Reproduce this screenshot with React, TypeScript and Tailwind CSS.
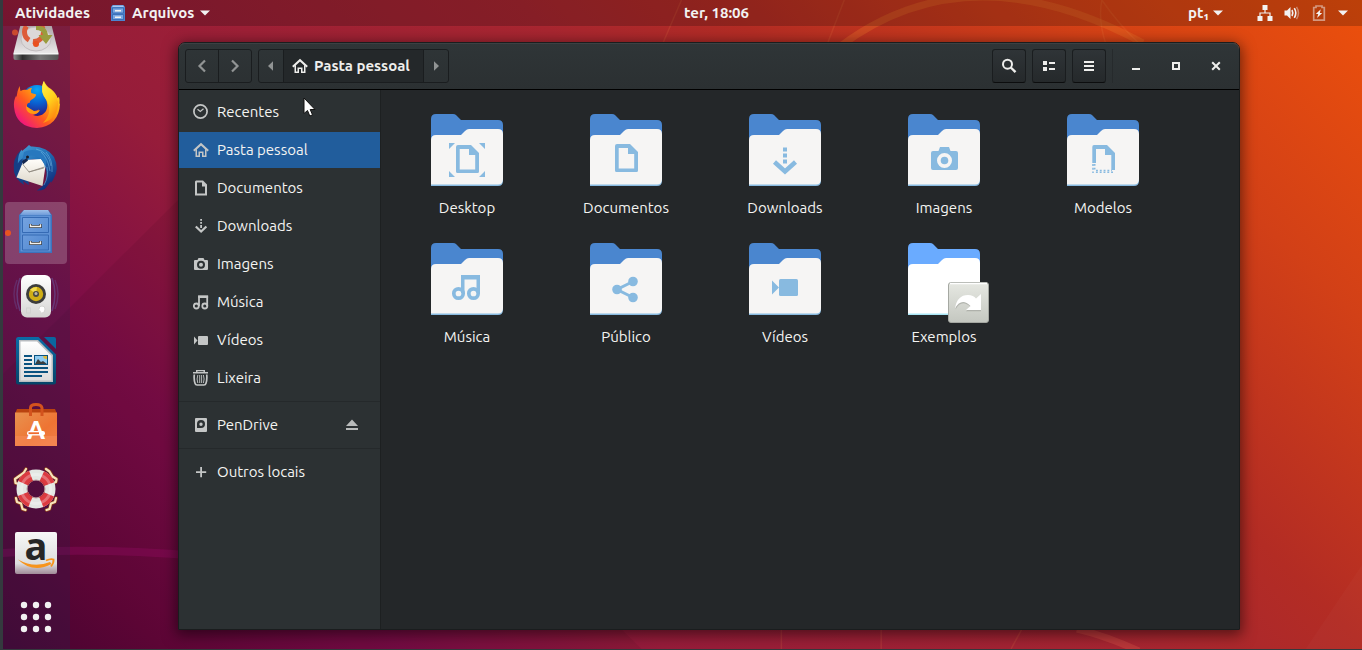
import React, { useState } from "react";

type IconProps = { className?: string };

/* ---------- symbolic 16px icons ---------- */

const Symbolic = ({ className = "size-4", children }: IconProps & { children: React.ReactNode }) => (
  <svg viewBox="0 0 16 16" className={`shrink-0 ${className}`} fill="currentColor" aria-hidden="true">
    {children}
  </svg>
);

const RecentIcon = () => (
  <Symbolic>
    <circle cx="7.500" cy="7.500" r="6.600" fill="none" stroke="currentColor" strokeWidth="1.700" />
    <path d="M4.500 5.200 7.300 7.500 10.500 4.800" fill="none" stroke="currentColor" strokeWidth="1.300" />
  </Symbolic>
);

const HomeIcon = () => (
  <Symbolic>
    <path d="M.8 8.8 8 2.2l7.2 6.6" fill="none" stroke="currentColor" strokeWidth="2" />
    <path d="M2.5 8v7H7v-4h2v4h4.500V8L12 6.800V13.500h-1.500V9.500h-5v4H4V6.800z" />
  </Symbolic>
);

const DocumentIcon = () => (
  <Symbolic>
    <path fillRule="evenodd" d="M3 .5h7L14 4.500V15.500H2v-14zM4 2.500v11h8V6.500H9V2.500z" />
  </Symbolic>
);

const DownloadIcon = () => (
  <Symbolic>
    <path d="M7.200 1h1.800v1.800H7.200zM7.200 4h1.800v1.800H7.200zM7.200 7h1.800v3H7.200z" />
    <path d="m2.800 8.500 5.300 5 5.300-5" fill="none" stroke="currentColor" strokeWidth="2.200" />
  </Symbolic>
);

const CameraIcon = () => (
  <Symbolic>
    <path
      fillRule="evenodd"
      d="M5.500 2h5l1 2H14q1 0 1 1v8q0 1-1 1H2q-1 0-1-1V5q0-1 1-1h2.500zM8 4.800a4 4 0 1 0 0 8 4 4 0 0 0 0-8zM8 6.800a2 2 0 1 1 0 4 2 2 0 0 1 0-4z"
    />
  </Symbolic>
);

const MusicIcon = () => (
  <Symbolic>
    <path d="M6 12V2.500h8.200V12" fill="none" stroke="currentColor" strokeWidth="1.800" />
    <path d="M5.100 1.600h10v2.400h-10z" />
    <circle cx="3.300" cy="12" r="2.500" fill="none" stroke="currentColor" strokeWidth="1.800" />
    <circle cx="11.800" cy="12" r="2.500" fill="none" stroke="currentColor" strokeWidth="1.800" />
  </Symbolic>
);

const VideoIcon = () => (
  <Symbolic>
    <rect x="5" y="4" width="10" height="9" rx="1" />
    <path d="M1 4.500 4.500 8.500 1 12.500z" />
  </Symbolic>
);

const TrashIcon = () => (
  <Symbolic>
    <path fillRule="evenodd" d="M3 0h9v2h3v1.600H0V2h3zM4.500 1.200V2h6v-.8z" />
    <path d="M1.300 4.500q-.6 5 .8 9 .4 1.500 2 1.500h6.800q1.600 0 2-1.500 1.400-4 .8-9" fill="none" stroke="currentColor" strokeWidth="1.700" />
    <path d="M4.800 5q-1.400 4 0 8M6.700 5v8M8.600 5v8M10.400 5q1.400 4 0 8" fill="none" stroke="currentColor" strokeWidth=".9" />
  </Symbolic>
);

const DriveIcon = () => (
  <Symbolic>
    <path
      fillRule="evenodd"
      d="M3 1h10q1 0 1 1v12q0 1-1 1H3q-1 0-1-1V2q0-1 1-1zM8 3a4 4 0 0 0-4 4v4h4a4 4 0 0 0 0-8zM8 5.500a1.700 1.700 0 1 1 0 3.400 1.700 1.700 0 0 1 0-3.400z"
    />
  </Symbolic>
);

const PlusIcon = () => (
  <Symbolic>
    <path d="M7.200 3h1.800v4.200h4.200V9H9v4.200H7.200V9H3V7.200h4.200z" />
  </Symbolic>
);

const EjectIcon = () => (
  <Symbolic>
    <path d="M8 2.500 14 9H2zM2 11h12v2H2z" />
  </Symbolic>
);

const Chevron = ({ flip = false }: { flip?: boolean }) => (
  <Symbolic>
    <path d={flip ? "m5 2.500 5.500 5.500L5 13.500" : "M11 2.500 5.500 8l5.500 5.500"} fill="none" stroke="currentColor" strokeWidth="2.200" />
  </Symbolic>
);

const Caret = ({ flip = false }: { flip?: boolean }) => (
  <Symbolic>
    <path d={flip ? "M6 3.200 11 8 6 12.800z" : "M10 3.200 5 8l5 4.800z"} />
  </Symbolic>
);

const DownCaret = () => (
  <svg viewBox="0 0 10 6" className="h-[6px] w-[10px] shrink-0" fill="currentColor" aria-hidden="true">
    <path d="M0 .5h10L5 5.500z" />
  </svg>
);

const SearchIcon = () => (
  <Symbolic>
    <circle cx="6.500" cy="6.200" r="4.500" fill="none" stroke="currentColor" strokeWidth="2" />
    <path d="m9.800 9.500 4.700 4.700" stroke="currentColor" strokeWidth="2.400" />
  </Symbolic>
);

const ListIcon = () => (
  <Symbolic>
    <path d="M2 3h4v4H2zM2 9h4v4H2zM8 4h6v2H8zM8 10h6v2H8z" />
  </Symbolic>
);

const MenuIcon = () => (
  <Symbolic>
    <path d="M3 3h10v2H3zM3 7h10v2H3zM3 11h10v2H3z" />
  </Symbolic>
);

const MinimizeIcon = () => (
  <Symbolic>
    <path d="M4 10h8v2H4z" />
  </Symbolic>
);

const MaximizeIcon = () => (
  <Symbolic>
    <path fillRule="evenodd" d="M4 4h8v8H4zM6 6v4h4V6z" />
  </Symbolic>
);

const CloseIcon = () => (
  <Symbolic>
    <path d="m4.200 4.200 7.600 7.600M11.800 4.200l-7.600 7.600" stroke="currentColor" strokeWidth="2" />
  </Symbolic>
);

const NetworkIcon = () => (
  <Symbolic>
    <path d="M5.500 0h5v5h-5zM.5 11h5v5h-5zM10.500 11h5v5h-5z" />
    <path d="M8 5v3M3 11V8h10v3" fill="none" stroke="currentColor" strokeWidth="1.200" />
  </Symbolic>
);

const VolumeIcon = () => (
  <Symbolic>
    <path d="M.5 5.500h2.500L6.500 2v12L3 10.500H.5z" />
    <path d="M8 5q1.600 3 0 6M10.300 3.200q3 4.800 0 9.600" fill="none" stroke="currentColor" strokeWidth="1.600" />
    <path d="M12.500 1.800q4 6.200 0 12.400" fill="none" stroke="currentColor" strokeWidth="1.500" opacity=".4" />
  </Symbolic>
);

const BatteryIcon = () => (
  <Symbolic>
    <path d="M5 1h6v1.500h2.300v12.700H2.700V2.500H5z" fill="none" stroke="currentColor" strokeWidth="1.700" opacity=".5" />
    <path d="M9.800 4.200 4.800 9h2.500l-1.300 4 5.200-5H8.800z" />
  </Symbolic>
);

/* ---------- dock application icons ---------- */

const AppIcon = ({ className = "size-12", children }: IconProps & { children: React.ReactNode }) => (
  <svg viewBox="0 0 48 48" className={`shrink-0 overflow-visible ${className}`} aria-hidden="true">
    {children}
  </svg>
);

const InstallerIcon = () => (
  <AppIcon>
    <defs>
      <linearGradient id="diskTop" x1="0" y1="0" x2="0" y2="1">
        <stop offset="0" stopColor="#a79fa3" />
        <stop offset="1" stopColor="#e9e7e8" />
      </linearGradient>
      <linearGradient id="diskFront" x1="0" y1="0" x2="1" y2="0">
        <stop offset="0" stopColor="#8e8e8e" />
        <stop offset=".2" stopColor="#2e2e2e" />
        <stop offset=".6" stopColor="#777" />
        <stop offset="1" stopColor="#555" />
      </linearGradient>
    </defs>
    <path d="M9 6h30l7.500 30h-45z" fill="url(#diskTop)" />
    <ellipse cx="24" cy="22" rx="15" ry="12" fill="#dcd8d9" stroke="#c2bdbf" />
    <path d="M1.500 36h45v5q0 2-2 2h-41q-2 0-2-2z" fill="url(#diskFront)" />
    <path d="M1.500 36h45v1.500h-45z" fill="#f5f5f5" />
    <circle cx="22" cy="15" r="9.500" fill="none" stroke="#dd5c38" strokeWidth="5" strokeDasharray="16 4" />
    <circle cx="24" cy="27" r="3" fill="#e9501f" />
    <circle cx="3" cy="15.500" r="3" fill="#c94a2e" />
    <path d="M24 9q11-1 12 9h4.500L34 27l-7.500-9H31q-1-5-7-5z" fill="#9a9c3e" />
  </AppIcon>
);

const FirefoxIcon = () => (
  <AppIcon>
    <defs>
      <linearGradient id="ffBody" x1=".95" y1=".1" x2=".15" y2=".9">
        <stop offset="0" stopColor="#ffe82e" />
        <stop offset=".35" stopColor="#ffa90f" />
        <stop offset=".65" stopColor="#ff5a1f" />
        <stop offset="1" stopColor="#f0147f" />
      </linearGradient>
      <radialGradient id="ffGlobe" cx=".5" cy=".15" r=".9">
        <stop offset="0" stopColor="#0aa7f5" />
        <stop offset=".5" stopColor="#0a5fd0" />
        <stop offset="1" stopColor="#30117a" />
      </radialGradient>
      <linearGradient id="ffFlame" x1="0" y1="0" x2=".4" y2="1">
        <stop offset="0" stopColor="#fff44a" />
        <stop offset=".55" stopColor="#ffd21c" />
        <stop offset="1" stopColor="#ff8a10" />
      </linearGradient>
    </defs>
    <circle cx="25" cy="19.500" r="15.500" fill="url(#ffGlobe)" />
    <path
      d="M7.500 5 8.500 10Q12 8 15 9q2-2 5-2.300-2 2.800-.8 5.300l5 1.500q-.5 3-5.200 5.500-1.500 1-1 2.500-3.500.500-3 4 1.500 5 7 4.500 3-.3 5-1.500-1 4.500-6 5.500 8 3 13-4 3-6-1-14-5-8-1-16 2 5 7 8 5 4 6.500 9l1.500-1q1 3 .5 7l.5-.5Q47 45 25 47 4 46 2 26q-.5-7 2-11l.5 1q1-7 3-11z"
      fill="url(#ffBody)"
    />
    <path d="M31.500 0q1.500 5 7 8.500 6 5 6.500 11l1 .5q1 17-15 22 10-10 4-22-8-9-3.500-20z" fill="url(#ffFlame)" />
    <path d="M14 25q0 8 8 8 4 0 6-4-3 1.500-6 1-3.500-2-8-5z" fill="#ff9a12" />
  </AppIcon>
);

const ThunderbirdIcon = () => (
  <AppIcon>
    <defs>
      <linearGradient id="tbWing" x1="0" y1="0" x2=".6" y2="1">
        <stop offset="0" stopColor="#4aa0d8" />
        <stop offset=".5" stopColor="#1f6db5" />
        <stop offset="1" stopColor="#122f7c" />
      </linearGradient>
      <linearGradient id="tbPaper" x1="0" y1="0" x2="0" y2="1">
        <stop offset="0" stopColor="#fffefa" />
        <stop offset="1" stopColor="#ddd6c8" />
      </linearGradient>
    </defs>
    <path d="M9 5Q0 13 2 27q2 8 10 13l-1-4 6 4-3-16z" fill="#153f86" />
    <path
      d="M10 6Q14 3 17 0l2 1.500Q35 1 42 12q6 12-1 23l-2 3 .3-2-6.500 8q-4 2-8 1.500 7-4 9-10 2-10-2-16-8-8-18-3l-3-3q-3 1-5 5 0-10 4.200-14z"
      fill="url(#tbWing)"
    />
    <path d="M10.500 18 14 15l15-1 4.500 7-3 20L4.500 32.500z" fill="url(#tbPaper)" />
    <path d="m10.500 19 6.500 8L32.500 22M16.800 27l15-4" fill="none" stroke="#8e887d" strokeWidth=".8" />
    <path d="M10 17q4-8 13-6 9 2 10 12 4-10-4-16-9-4-17 0z" fill="#2878be" />
    <path d="M24 4q13 3 15 17M29 7q7 6 9 19M34 7q7 8 6 20M35 22q2 9-3 18" fill="none" stroke="#7cc2ea" strokeWidth="1" opacity=".5" />
    <path d="m10 16 5-3 1 2.500-5 4z" fill="#16284f" />
    <circle cx="15.500" cy="12" r="1.500" fill="#1b1a26" />
  </AppIcon>
);

const FilesIcon = ({ className }: IconProps) => (
  <AppIcon className={className}>
    <defs>
      <linearGradient id="cabinetTop" x1="0" y1="0" x2="0" y2="1">
        <stop offset="0" stopColor="#9fbfe9" />
        <stop offset="1" stopColor="#6e9bd9" />
      </linearGradient>
      <linearGradient id="drawer" x1="0" y1="0" x2="1" y2="1">
        <stop offset="0" stopColor="#75a3e0" />
        <stop offset="1" stopColor="#4e86cf" />
      </linearGradient>
    </defs>
    <path d="M12 1h24l4 5v38H7V6z" fill="#3b73bd" />
    <path d="M12 1h24l3 5H8z" fill="url(#cabinetTop)" />
    <path d="M8.500 6.500h30v36h-30z" fill="#6093d6" />
    <path d="M10.500 8.500h26v15h-26zM10.500 26h26v15h-26z" fill="url(#drawer)" stroke="#356ab4" />
    <path d="M18.500 15v2.500h10v-2.500M18.500 32v2.500h10V32" fill="none" stroke="#3a3f47" strokeWidth="2.800" />
    <path d="M18.500 15.200v2.300h10v-2.300M18.500 32.200v2.300h10v-2.300" fill="none" stroke="#f4f1ea" strokeWidth="1.300" />
  </AppIcon>
);

/* simplified cabinet for the 16px menu slot */
const SmallFilesIcon = () => (
  <Symbolic>
    <path d="M2.500 0h11l1.500 2v14H1V2z" fill="#4c85d0" />
    <path d="M3 .5h10L14 2H2z" fill="#a9c8f0" />
    <path d="M2.500 3h11v5h-11zM2.500 9.500h11v5h-11z" fill="#7aa8e4" stroke="#2f62a8" strokeWidth=".7" />
    <path d="M5 5h6v1.500H5zM5 11.500h6V13H5z" fill="#f1f1ee" />
  </Symbolic>
);

const SpeakerIcon = () => (
  <AppIcon>
    <defs>
      <linearGradient id="speakerBox" x1="0" y1="0" x2="0" y2="1">
        <stop offset="0" stopColor="#ffffff" />
        <stop offset="1" stopColor="#d5d5d3" />
      </linearGradient>
    </defs>
    <g fill="none" stroke="#6a64b0" strokeWidth="1.500">
      <path d="M5 7q-6 14 0 29M43 7q6 14 0 29" opacity=".3" />
      <path d="M8 5q-6 16 0 33M40 5q6 16 0 33" opacity=".45" />
    </g>
    <rect x="9" y="2" width="30" height="42.500" rx="6" fill="url(#speakerBox)" />
    <circle cx="24" cy="21" r="10" fill="#3c3d3d" />
    <circle cx="24" cy="21" r="7.200" fill="#cfae16" />
    <path d="m24 21-6-4.500q3-2.800 7-2.600z" fill="#f2dc50" />
    <circle cx="24" cy="21" r="3" fill="#4b4a42" />
    <circle cx="24" cy="20.500" r="1.500" fill="#b9b7ad" />
    <path d="M27 36q0-3 3-3t3 3q0 4-3 4" fill="#fff" stroke="#d4d4d2" />
    <rect x="14.500" y="35" width="4" height="5" fill="none" stroke="#d2d2d0" />
  </AppIcon>
);

const WriterIcon = () => (
  <AppIcon>
    <defs>
      <linearGradient id="writerPaper" x1="0" y1="0" x2="0" y2="1">
        <stop offset="0" stopColor="#ffffff" />
        <stop offset="1" stopColor="#dcdcdc" />
      </linearGradient>
      <linearGradient id="writerEdge" x1="0" y1="0" x2="0" y2="1">
        <stop offset="0" stopColor="#0a6ca6" />
        <stop offset="1" stopColor="#054468" />
      </linearGradient>
    </defs>
    <path d="M6.500 0h20L44 17.500V45q0 2.500-2.500 2.500h-35Q4 47.500 4 45V2.500Q4 0 6.500 0z" fill="url(#writerEdge)" />
    <path d="M32 0h10q2 0 2 2v10z" fill="#0a66a0" />
    <path d="M7 3h19l15 15v27H7z" fill="#b8bcc0" />
    <path d="M8.500 4.500H25L39.500 19v24.500h-31z" fill="url(#writerPaper)" />
    <path d="M12 18h8v2h-8zM12 22h8v2h-8zM12 26h8v2h-8zM12 30h24v2H12zM12 34h24v2H12zM12 38h18v2H12z" fill="#0a5380" />
    <path d="M22 18h14v10H22z" fill="#0a5380" />
    <path d="M23 19h12v8H23z" fill="#8ecbf0" />
    <path d="M31 19h4v3q-3.500.5-4-3z" fill="#dcb83c" />
    <path d="m23 27 3-5 3 3 2-1 4 3z" fill="#3b3f40" />
  </AppIcon>
);

const SoftwareIcon = () => (
  <AppIcon>
    <defs>
      <linearGradient id="bag" x1="0" y1="0" x2="1" y2="1">
        <stop offset="0" stopColor="#e8924f" />
        <stop offset=".6" stopColor="#ee7433" />
        <stop offset="1" stopColor="#f07f4a" />
      </linearGradient>
    </defs>
    <path d="M5 8h38l2 5H3z" fill="#b9430f" />
    <path d="M3 11.500h42V45H3z" fill="url(#bag)" />
    <path d="M3 35h42v10H3z" fill="#f58a58" opacity=".6" />
    <path d="M18.500 15V7q0-3.500 5.500-3.500T30 7v8" fill="none" stroke="#d4531d" strokeWidth="3" />
    <text x="24" y="38" textAnchor="middle" fontFamily="Lato, sans-serif" fontWeight="900" fontSize="25" fill="#fff">
      A
    </text>
    <rect x="15" y="30" width="18" height="4.500" rx="2.200" fill="#fff" />
    <rect x="16.500" y="31.300" width="10.500" height="1.800" fill="#f06a2c" />
  </AppIcon>
);

const HelpIcon = () => (
  <AppIcon>
    <g fill="none" stroke="#8a3b1c" strokeWidth="3.600" strokeLinejoin="round" strokeLinecap="round">
      <path d="M14 4l-2.500 4-5 3.500L3 14l.5 4 3 1M34 4l3.500 2.500 3 5 4 2.500-.5 3-3 1M4 33l1 4 4 1.500 1.500 5.500 3 1M44 33l-1 4-4 1.500-1.500 5.500-3 1" />
    </g>
    <g fill="none" stroke="#f6e3bd" strokeWidth="2.200" strokeLinejoin="round" strokeLinecap="round">
      <path d="M14 4l-2.500 4-5 3.500L3 14l.5 4 3 1M34 4l3.500 2.500 3 5 4 2.500-.5 3-3 1M4 33l1 4 4 1.500 1.500 5.500 3 1M44 33l-1 4-4 1.500-1.500 5.500-3 1" />
    </g>
    <circle cx="24" cy="24" r="14" fill="none" stroke="#e3e7e3" strokeWidth="11" />
    <circle cx="24" cy="24" r="14" fill="none" stroke="#dc3a40" strokeWidth="11" strokeDasharray="11 11" strokeDashoffset="-5.500" />
    <circle cx="24" cy="24" r="14.500" fill="none" stroke="#fff" strokeWidth="3" opacity=".28" />
    <circle cx="24" cy="24" r="9" fill="none" stroke="#7a2a35" strokeWidth="1" opacity=".4" />
  </AppIcon>
);

const AmazonIcon = () => (
  <AppIcon>
    <defs>
      <linearGradient id="amazonTile" x1="0" y1="0" x2="0" y2="1">
        <stop offset="0" stopColor="#f7f7f7" />
        <stop offset=".75" stopColor="#dedede" />
        <stop offset="1" stopColor="#a08a98" />
      </linearGradient>
    </defs>
    <rect x="3" y="3" width="42" height="42" rx="2" fill="url(#amazonTile)" />
    <text x="24" y="31" textAnchor="middle" fontFamily="'Open Sans', sans-serif" fontWeight="700" fontSize="38" fill="#262626">
      a
    </text>
    <path d="M6 30.500q16 9 32 2.500l1.500 2Q21 45 6 30.500z" fill="#f7941c" />
    <path d="M34 31.500q5-2.200 7.500-1 .5 3-2.500 7" fill="none" stroke="#f7941c" strokeWidth="1.900" />
  </AppIcon>
);

const AppGridIcon = () => (
  <AppIcon>
    {[12, 24, 36].map((cy) => [12, 24, 36].map((cx) => <circle key={`${cx}-${cy}`} cx={cx} cy={cy} r="3.200" fill="#f2f2f2" />))}
  </AppIcon>
);

/* ---------- folder emblems, drawn on the 72px folder ---------- */

const DocumentEmblem = ({ y = 0 }: { y?: number }) => (
  <path
    transform={`translate(0 ${y})`}
    fillRule="evenodd"
    d="M27 30h13l8 8v18.500q0 1.500-1.500 1.500H26.500Q25 58 25 56.500V32q0-2 2-2zM28.700 34v20.500h15.500V40H38V34z"
  />
);

const emblems: Record<string, React.ReactNode> = {
  desktop: (
    <>
      <DocumentEmblem y={1} />
      <path d="M18 29h6l-6 6zM54 29h-6l6 6zM18 63h6l-6-6zM54 63h-6l6-6z" />
    </>
  ),
  documents: <DocumentEmblem />,
  downloads: (
    <>
      <path d="M34 33.500h4v4h-4zM34 39.500h4v4h-4zM34 45.500h4v4h-4z" />
      <path d="m25.500 48 10.500 9.500L46.500 48" fill="none" stroke="currentColor" strokeWidth="4.500" />
    </>
  ),
  pictures: (
    <path
      fillRule="evenodd"
      d="M32 33h9l1.500 4H48q2 0 2 2v15q0 2-2 2H25q-2 0-2-2V39q0-2 2-2h5.500zM36.500 39a7.500 7.500 0 1 0 0 15 7.500 7.500 0 0 0 0-15zM36.500 42.700a3.800 3.800 0 1 1 0 7.600 3.800 3.800 0 0 1 0-7.600z"
    />
  ),
  templates: (
    <>
      <path fillRule="evenodd" d="M27 31h13l8 8v17h-3.700V41H38V35h-9v14h-3.700V33q0-2 1.700-2z" />
      <g fill="none" stroke="currentColor" strokeWidth="1.600" strokeDasharray="1.900 1.900">
        <path d="M26 50v9M29 56.500h16" />
        <path d="M27.700 48v9M27 58.300h19" strokeDashoffset="1.900" />
      </g>
    </>
  ),
  music: (
    <>
      <path d="M30 32h19v18h-3.500V36.500h-12V50H30z" />
      <circle cx="27.500" cy="50.500" r="4.700" fill="none" stroke="currentColor" strokeWidth="3.700" />
      <circle cx="42.500" cy="50.500" r="4.700" fill="none" stroke="currentColor" strokeWidth="3.700" />
    </>
  ),
  public: (
    <>
      <circle cx="27" cy="46.500" r="4.800" />
      <circle cx="43" cy="38.500" r="4.800" />
      <circle cx="43" cy="54.500" r="4.800" />
      <path d="M43 38.500 27 46.500l16 8" fill="none" stroke="currentColor" strokeWidth="3" />
    </>
  ),
  videos: (
    <>
      <rect x="30" y="36" width="19" height="17" rx="1.500" />
      <path d="m23 37.500 7 7-7 7z" />
    </>
  ),
};

const FolderIcon = ({ emblem, link = false }: { emblem?: string; link?: boolean }) => (
  <svg viewBox="0 0 72 72" className="size-[72px] overflow-visible text-[#88bae0]" fill="currentColor" aria-hidden="true">
    <path d="M0 5q0-5 5-5h17q2 0 3 1l5 5h37q5 0 5 5v20H0z" fill={link ? "#6aabff" : "#4a86cf"} />
    <path d="M0 26h72v41q0 5-5 5H0z" fill={link ? "#a8e6f5" : "#88bae0"} />
    <path d="M0 26q0-5 5-5h25l4-4q2-2 4-2h29q5 0 5 5v45q0 5.500-5 5.500H0z" fill={link ? "#ffffff" : "#f6f5f4"} />
    {emblem && emblems[emblem]}
    {link && (
      <>
        <defs>
          <linearGradient id="linkTile" x1="0" y1="0" x2="0" y2="1">
            <stop offset="0" stopColor="#e6e8e2" />
            <stop offset="1" stopColor="#c4c7c0" />
          </linearGradient>
        </defs>
        <rect x="40.500" y="39.500" width="40" height="40" rx="2.500" fill="url(#linkTile)" stroke="#a5a8a2" />
        <path d="M42 40.500h37" stroke="#fff" strokeWidth="1.500" />
        <path d="M47.500 66.500Q49 53 60 53q6 0 8 3.500l5-4.500v16.300H58l4.500-4.500q-9-8.500-15 2.700z" fill="#8f928c" opacity=".5" />
        <path d="M47 65.500Q49 52 60 52q5.500 0 8 3.500l5-4.500v16H58l4.500-4q-9-9-15.500 2.500z" fill="#fff" />
      </>
    )}
  </svg>
);

/* ---------- data ---------- */

const dockApps = [
  { name: "Instalar Ubuntu", icon: <InstallerIcon /> },
  { name: "Firefox", icon: <FirefoxIcon /> },
  { name: "Thunderbird", icon: <ThunderbirdIcon /> },
  { name: "Arquivos", icon: <FilesIcon />, running: true },
  { name: "Rhythmbox", icon: <SpeakerIcon /> },
  { name: "LibreOffice Writer", icon: <WriterIcon /> },
  { name: "Programas Ubuntu", icon: <SoftwareIcon /> },
  { name: "Ajuda", icon: <HelpIcon /> },
  { name: "Amazon", icon: <AmazonIcon /> },
  { name: "Mostrar aplicativos", icon: <AppGridIcon /> },
];

const places = [
  { label: "Recentes", icon: <RecentIcon /> },
  { label: "Pasta pessoal", icon: <HomeIcon /> },
  { label: "Documentos", icon: <DocumentIcon /> },
  { label: "Downloads", icon: <DownloadIcon /> },
  { label: "Imagens", icon: <CameraIcon /> },
  { label: "Música", icon: <MusicIcon /> },
  { label: "Vídeos", icon: <VideoIcon /> },
  { label: "Lixeira", icon: <TrashIcon /> },
];

const folders = [
  { label: "Desktop", emblem: "desktop" },
  { label: "Documentos", emblem: "documents" },
  { label: "Downloads", emblem: "downloads" },
  { label: "Imagens", emblem: "pictures" },
  { label: "Modelos", emblem: "templates" },
  { label: "Música", emblem: "music" },
  { label: "Público", emblem: "public" },
  { label: "Vídeos", emblem: "videos" },
  { label: "Exemplos", link: true },
];

/* ---------- sections ---------- */

const Wallpaper = () => (
  <svg
    viewBox="0 0 1362 650"
    preserveAspectRatio="xMidYMid slice"
    className="absolute inset-0 size-full"
    fill="none"
    aria-hidden="true"
  >
    <path d="M0 375 178 198 640 650H0z" fill="#000" opacity=".06" />
    <path d="M1362 565v85h-57z" fill="#fff" opacity=".02" />
    <path d="M0 554q90-6 200 3" stroke="#8a0a5c" strokeWidth="8" opacity=".45" />
    <path d="M838 47q130-98 304-4" stroke="#f07a2c" strokeWidth="7" opacity=".3" />
    <path d="M1076 630q30 7 62 22" stroke="#e0604c" strokeWidth="7" opacity=".3" />
    <path
      d="m680 0-19 44M843 0l-17 44M1101 0q-4 20 4 44M1101 0q18 26 38 44M780 628v22M880 628v22M1022 628l-12 22"
      stroke="#f08a4c"
      strokeWidth="1.500"
      opacity=".15"
    />
  </svg>
);

const TopBar = () => (
  <header className="relative grid h-[26px] grid-cols-[10fr_auto_9fr] items-center bg-black/20 text-[15px] leading-5 font-bold text-[#f2f2f2]">
    <div className="flex items-center gap-5 pl-3">
      <button type="button">Atividades</button>
      <button type="button" className="flex items-center gap-[6px]">
        <SmallFilesIcon />
        Arquivos
        <DownCaret />
      </button>
    </div>
    <button type="button">ter, 18:06</button>
    <div className="flex items-center justify-end gap-[34px] pr-[14px]">
      <button type="button" className="flex items-center gap-1">
        pt₁
        <DownCaret />
      </button>
      <button type="button" className="flex items-center gap-[11px]" aria-label="Menu do sistema">
        <NetworkIcon />
        <VolumeIcon />
        <BatteryIcon />
        <DownCaret />
      </button>
    </div>
  </header>
);

const Dock = () => (
  <nav className="w-[67px] shrink-0 overflow-hidden bg-[#29244e]/25 pl-[2px]" aria-label="Dock">
    <ul className="-mt-4 flex flex-col gap-[2px]">
      {dockApps.map((app) => (
        <li key={app.name}>
          <button
            type="button"
            aria-label={app.name}
            className={`relative flex size-[62px] items-center justify-center rounded-[4px] ${app.running ? "bg-white/20" : ""}`}
          >
            {app.running && <span className="absolute left-0 size-[6px] rounded-full bg-[#e95420]" />}
            {app.icon}
          </button>
        </li>
      ))}
    </ul>
  </nav>
);

const toolButton =
  "flex size-[34px] items-center justify-center rounded-[3px] border border-[#1a1d1f] border-b-[#0c0d0e] bg-linear-to-b from-[#2f3437] to-[#25292b]";
const windowButton = "flex size-[34px] items-center justify-center";

const TitleBar = () => (
  <div className="flex h-[47px] items-center gap-[6px] rounded-t-[6px] border-b border-black bg-linear-to-b from-[#2f3537] to-[#2b3032] px-[6px] text-[#eeeeec] shadow-[inset_0_1px_0_#3b4143]">
    <div className="flex h-[34px] rounded-[3px] border border-[#1a1d1f] text-[#919494]">
      <button type="button" aria-label="Voltar" className="flex w-[33px] items-center justify-center border-r border-[#1a1d1f]">
        <Chevron />
      </button>
      <button type="button" aria-label="Avançar" className="flex w-8 items-center justify-center">
        <Chevron flip />
      </button>
    </div>
    <div className="flex h-[34px] rounded-[3px] border border-[#1a1d1f] text-[#919494]">
      <button type="button" aria-label="Caminho anterior" className="flex w-6 items-center justify-center">
        <Caret />
      </button>
      <button
        type="button"
        className="flex items-center gap-[6px] border-x border-[#1a1d1f] bg-[#24282a] pr-[13px] pl-2 text-[15px] font-bold text-[#eeeeec]"
      >
        <HomeIcon />
        Pasta pessoal
      </button>
      <button type="button" aria-label="Próximo caminho" className="flex w-6 items-center justify-center">
        <Caret flip />
      </button>
    </div>
    <div className="flex-1" />
    <button type="button" aria-label="Pesquisar" className={toolButton}>
      <SearchIcon />
    </button>
    <button type="button" aria-label="Exibir em lista" className={toolButton}>
      <ListIcon />
    </button>
    <button type="button" aria-label="Menu" className={toolButton}>
      <MenuIcon />
    </button>
    <div className="h-[34px] w-px bg-[#262a2c]" />
    <button type="button" aria-label="Minimizar" className={windowButton}>
      <MinimizeIcon />
    </button>
    <button type="button" aria-label="Maximizar" className={windowButton}>
      <MaximizeIcon />
    </button>
    <button type="button" aria-label="Fechar" className={windowButton}>
      <CloseIcon />
    </button>
  </div>
);

const placeRow = "flex h-9 w-full items-center gap-2 px-[14px] text-left";

const Sidebar = ({ current, onSelect }: { current: string; onSelect: (label: string) => void }) => (
  <aside className="w-[202px] shrink-0 border-r border-[#1d2021] bg-[#2c3133] pt-1 text-[15px] text-[#f4f4f2]">
    <ul className="flex flex-col gap-[2px]">
      {places.map((place) => (
        <li key={place.label}>
          <button
            type="button"
            onClick={() => onSelect(place.label)}
            className={`${placeRow} ${current === place.label ? "bg-[#215d9c]" : ""}`}
          >
            <span className="text-[#c4c6c6]">{place.icon}</span>
            {place.label}
          </button>
        </li>
      ))}
    </ul>
    <hr className="my-[5px] border-[#25292b]" />
    <div className="flex items-center pr-5">
      <button type="button" className={placeRow}>
        <span className="text-[#c4c6c6]">
          <DriveIcon />
        </span>
        PenDrive
      </button>
      <button type="button" aria-label="Ejetar PenDrive" className="text-[#b9bbbb]">
        <EjectIcon />
      </button>
    </div>
    <hr className="my-[5px] border-[#25292b]" />
    <button type="button" className={placeRow}>
      <span className="text-[#c4c6c6]">
        <PlusIcon />
      </span>
      Outros locais
    </button>
  </aside>
);

const FolderGrid = () => (
  <main className="grid flex-1 grid-cols-[repeat(auto-fill,158px)] content-start gap-x-px gap-y-[25px] bg-[#242729] px-[7px] pt-6 text-[15px] leading-5 text-[#f4f4f2]">
    {folders.map((folder) => (
      <button key={folder.label} type="button" className="flex flex-col items-center gap-3">
        <FolderIcon emblem={folder.emblem} link={folder.link} />
        {folder.label}
      </button>
    ))}
  </main>
);

export default function App() {
  const [current, setCurrent] = useState("Pasta pessoal");

  return (
    <div className="relative flex min-h-screen flex-col border-b border-l-[3px] border-[#343a3e] bg-linear-[45deg,#4c0434_0%,#620639_8%,#7b0c47_20%,#961c3a_33%,#a82630_58%,#b32c24_68%,#d24017_84%,#ec500c_100%] font-['Ubuntu','Noto_Sans',sans-serif]">
      <Wallpaper />
      <TopBar />
      <div className="relative flex flex-1">
        <Dock />
        <div className="flex min-w-0 flex-1 pt-4 pr-[122px] pb-[19px] pl-[108px]">
          <section
            aria-label="Pasta pessoal"
            className="flex min-w-0 flex-1 flex-col rounded-t-[7px] border border-[#1a1d1e] shadow-[0_3px_14px_2px_rgba(0,0,0,0.5)]"
          >
            <TitleBar />
            <div className="flex flex-1">
              <Sidebar current={current} onSelect={setCurrent} />
              <FolderGrid />
            </div>
          </section>
        </div>
      </div>

      {/* Mouse pointer */}
      <svg viewBox="0 0 13 20" className="pointer-events-none absolute top-[97px] left-[300px] h-5 w-[13px]" aria-hidden="true">
        <path d="M1 1v15.500l3.500-3 2.300 5.500 2.700-1.200L7.200 12.500H12z" fill="#fff" stroke="#111" />
      </svg>
    </div>
  );
}
